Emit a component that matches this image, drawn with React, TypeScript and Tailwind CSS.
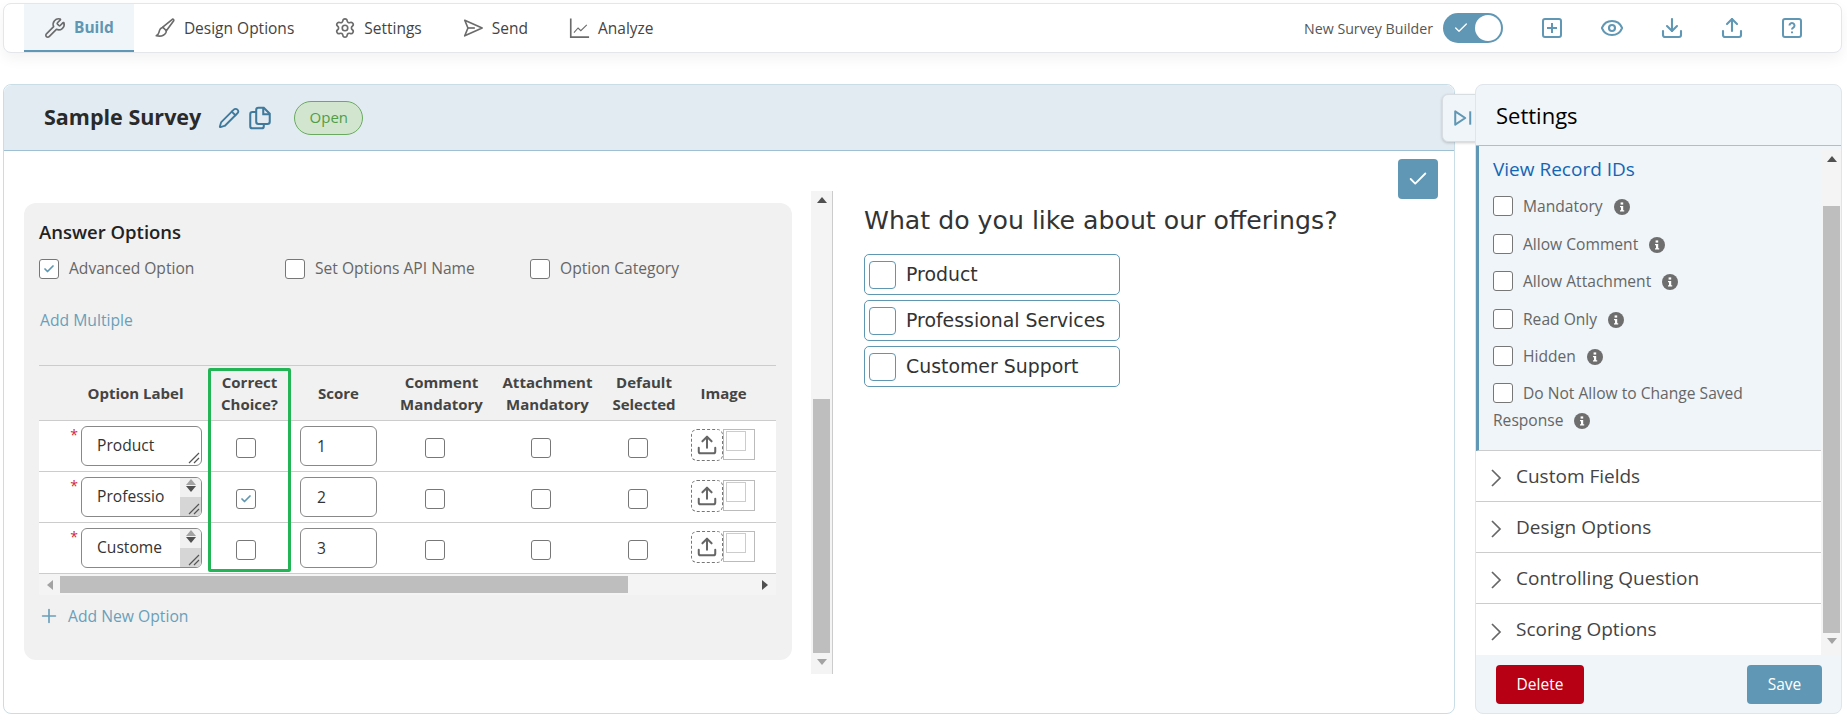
import React from "react";
import { Wrench, Settings as Gear, Eye, Download, Upload, Pencil, Check, Plus } from "lucide-react";

const grid = "grid grid-cols-[169px_83px_95px_106px_106px_87px_91px]";

const Box: React.FC<{ checked?: boolean }> = ({ checked }) => (
  <span className="w-5 h-5 shrink-0 flex items-center justify-center bg-white border border-[#777] rounded-[3px]">
    {checked && <Check className="w-3 h-3 text-[#5f97b3]" strokeWidth={3.5} />}
  </span>
);

const Info = () => (
  <svg viewBox="0 0 16 16" className="w-4 h-4 shrink-0">
    <circle cx="8" cy="8" r="8" fill="#6e6e6e" />
    <rect x="6.6" y="3.4" width="2.6" height="2.2" fill="#fff" />
    <path d="M6 7h3.2v4.2h1v1.2H6v-1.2h1V8.2H6z" fill="#fff" />
  </svg>
);

const Grip = () => (
  <svg viewBox="0 0 12 12" className="absolute right-[1px] bottom-[1px] w-3 h-3">
    <path d="M1 11 11 1M6 11l5-5" stroke="#555" strokeWidth="1.2" fill="none" />
  </svg>
);

const Arrow: React.FC<{ dir: "up" | "down" | "left" | "right"; dark?: boolean }> = ({ dir, dark }) => {
  const pts = { up: "0,7 5,1 10,7", down: "0,1 5,7 10,1", left: "8,0 2,5 8,10", right: "2,0 8,5 2,10" }[dir];
  return (
    <svg viewBox="0 0 10 10" className="w-[10px] h-[10px]">
      <polygon points={pts} fill={dark ? "#505050" : "#a3a3a3"} />
    </svg>
  );
};

type IconProps = { className?: string; strokeWidth?: number };

const BrushIcon: React.FC<IconProps> = ({ className, strokeWidth }) => (
  <svg viewBox="0 0 24 24" className={className} fill="none" stroke="currentColor" strokeWidth={strokeWidth} strokeLinejoin="round" strokeLinecap="round">
    <path d="M20 2.500c1-.5 2 .5 1.500 1.500L13.500 15 9.500 11z" />
    <path d="M9.500 11.500c-3 .5-3.500 2.500-4 5-.3 1.500-1.500 3-3 4 4.500 1 8.500 0 10.500-3.500.5-1 .5-1.500.2-2.500" />
  </svg>
);

const SendIcon: React.FC<IconProps> = ({ className, strokeWidth }) => (
  <svg viewBox="0 0 24 24" className={className} fill="none" stroke="currentColor" strokeWidth={strokeWidth} strokeLinejoin="round">
    <path d="M3 3.500 22 12 3 20.500 6.500 12z" />
    <path d="M6.500 12H14" />
  </svg>
);

const ChartIcon: React.FC<IconProps> = ({ className, strokeWidth }) => (
  <svg viewBox="0 0 24 24" className={className} fill="none" stroke="currentColor" strokeWidth={strokeWidth}>
    <path d="M3 1.500V22h20" />
    <path d="M6.500 17l4.500-5 3 3 6.500-6.500" strokeWidth="1.200" />
  </svg>
);

const tabs = [
  { label: "Design Options", Icon: BrushIcon },
  { label: "Settings", Icon: Gear },
  { label: "Send", Icon: SendIcon },
  { label: "Analyze", Icon: ChartIcon },
];

const TopBar = () => (
  <div className="mx-[3px] mt-[3px] w-[1839px] h-[50px] flex items-stretch justify-between bg-white border border-[#e3e6ea] rounded-lg shadow-[0_6px_14px_rgba(0,0,0,0.05)]">
    <div className="flex pl-5">
      <div className="flex items-center gap-2 px-5 bg-[#eff5f8] border-b-2 border-[#6097b4] pt-[2px]">
        <Wrench className="w-[22px] h-[22px] text-[#6b6b6b]" strokeWidth={1.8} />
        <span className="text-[15.5px] font-bold text-[#6097b4]">Build</span>
      </div>
      {tabs.map(({ label, Icon }) => (
        <div key={label} className="flex items-center gap-2 px-5">
          <Icon className="w-[22px] h-[22px] text-[#6b6b6b]" strokeWidth={1.8} />
          <span className="mt-[2px] text-[15.5px] text-[#444]">{label}</span>
        </div>
      ))}
    </div>
    <div className="flex items-center pr-[37px]">
      <span className="mt-[1px] text-[14.2px] text-[#555]">New Survey Builder</span>
      <div className="ml-[10px] w-[60px] h-[30px] rounded-full bg-[#6097b4] flex items-center justify-between pl-[10px] pr-[2px]">
        <Check className="w-4 h-4 text-white" strokeWidth={2} />
        <span className="w-[26px] h-[26px] rounded-full bg-white" />
      </div>
      <div className="ml-[37px] flex items-center gap-[36px] text-[#6097b4]">
        <svg viewBox="0 0 24 24" className="w-6 h-6" fill="none" stroke="currentColor" strokeWidth="2">
          <rect x="3" y="3" width="18" height="18" rx="2" />
          <path d="M12 7v10M7 12h10" />
        </svg>
        <Eye className="w-6 h-6" strokeWidth={2.1} />
        <Download className="w-6 h-6" strokeWidth={2.1} />
        <Upload className="w-6 h-6" strokeWidth={2.1} />
        <svg viewBox="0 0 24 24" className="w-6 h-6" fill="none" stroke="currentColor" strokeWidth="2">
          <rect x="3" y="3" width="18" height="18" rx="2" />
          <path d="M9.500 9.500a2.500 2.500 0 1 1 3.800 2.100c-.8.500-1.300 1-1.300 2" />
          <path d="M12 15.500v1.800" />
        </svg>
      </div>
    </div>
  </div>
);

const allRows = [
  { label: "Product", score: "1", correct: false, scroll: false },
  { label: "Professional Services", score: "2", correct: true, scroll: true },
  { label: "Customer Support", score: "3", correct: false, scroll: true },
];

const CheckCell: React.FC<{ checked?: boolean }> = ({ checked }) => (
  <div className="flex justify-center pr-2 pt-[17px]">
    <Box checked={checked} />
  </div>
);

const OptionRow: React.FC<(typeof allRows)[number]> = ({ label, score, correct, scroll }) => (
  <div className={`${grid} h-[51px] bg-white border-b border-[#ccc]`}>
    <div className="flex justify-end pr-[6px] pt-[5px]">
      <span className="mr-[3px] text-[14px] leading-[18px] text-[#d0263c]">*</span>
      <div className="relative w-[121px] h-[40px] border border-[#888] rounded-md overflow-hidden bg-white">
        <div className="pl-[15px] pt-[5px] w-[86px] text-[15.6px] leading-[26px] text-[#333] break-all">{label}</div>
        {scroll && (
          <div className="absolute right-0 top-0 bottom-0 w-[21px] bg-[#f1f1f1] flex flex-col items-center">
            <Arrow dir="up" />
            <div className="-mt-[3px]"><Arrow dir="down" dark /></div>
            <div className="mt-[2px] w-full flex-1 bg-[#d6d6d6]" />
          </div>
        )}
        <Grip />
      </div>
    </div>
    <CheckCell checked={correct} />
    <div className="flex justify-center pt-[5px]">
      <div className="w-[77px] h-[40px] border border-[#888] rounded-md pl-4 pt-[2px] flex items-center text-[15.6px] text-[#333]">{score}</div>
    </div>
    <CheckCell />
    <CheckCell />
    <CheckCell />
    <div className="flex items-start pl-[6px] pt-2">
      <div className="w-8 h-8 border border-dashed border-[#777] rounded-md flex items-center justify-center">
        <Upload className="w-[22px] h-[22px] text-[#666]" strokeWidth={2.2} />
      </div>
      <div className="w-8 h-[31px] border border-[#bbb] pl-[2px] pt-[1px]">
        <div className="w-5 h-5 border border-[#ccc]" />
      </div>
    </div>
  </div>
);

const AnswerOptions = () => (
  <div className="w-[768px] h-[457px] mt-3 px-[15px] bg-[#f1f1f1] rounded-xl">
    <div className="pt-[15px] text-[18.500px] leading-[28px] font-semibold text-[#222]">Answer Options</div>
    <div className="mt-[13px] flex h-5 items-center text-[15.6px] text-[#666]">
      <div className="w-[246px] flex items-center gap-[10px]"><Box checked />Advanced Option</div>
      <div className="w-[245px] flex items-center gap-[10px]"><Box />Set Options API Name</div>
      <div className="flex items-center gap-[10px]"><Box />Option Category</div>
    </div>
    <div className="mt-[29px] pl-[1px] text-[15.7px] leading-6 text-[#6a9fb9]">Add Multiple</div>
    <div className="relative mt-[33px] w-[737px]">
      <div className={`${grid} h-[56px] border-y border-[#ccc] text-[15px] leading-[22px] font-bold text-[#444] text-center items-center`}>
        <div className="pl-[24px]">Option Label</div>
        <div>Correct<br />Choice?</div>
        <div>Score</div>
        <div className="pl-[5px]">Comment<br />Mandatory</div>
        <div className="pl-[5px]">Attachment<br />Mandatory</div>
        <div className="pl-[5px]">Default<br />Selected</div>
        <div className="-ml-[14px]">Image</div>
      </div>
      {allRows.map((r) => <OptionRow key={r.label} {...r} />)}
      <div className="absolute left-[169px] top-[3px] w-[83px] h-[204px] border-[3px] border-[#22b455] rounded-[2px]" />
      <div className="h-[21px] bg-[#f4f4f4] flex items-center">
        <div className="w-[21px] flex justify-center"><Arrow dir="left" /></div>
        <div className="w-[568px] h-[17px] bg-[#bebebe]" />
        <div className="flex-1 flex justify-end pr-[6px]"><Arrow dir="right" dark /></div>
      </div>
    </div>
    <div className="mt-[9px] flex items-center gap-[8px] text-[15.7px] leading-6 text-[#6a9fb9]">
      <Plus className="-ml-[1px] w-[22px] h-[22px]" strokeWidth={1.8} />
      Add New Option
    </div>
  </div>
);

const Preview = () => (
  <div className="ml-[31px] font-['DejaVu_Sans',sans-serif]">
    <div className="pt-[13px] text-[25.200px] leading-[34px] text-[#333]">What do you like about our offerings?</div>
    <div className="mt-[16px] flex flex-col gap-[5px]">
      {allRows.map((r) => (
        <div key={r.label} className="w-[256px] h-[41px] flex items-center border border-[#5f97b3] rounded-[5px] pl-[4px] text-[18.900px] text-[#333]">
          <span className="w-[27px] h-[28px] border border-[#5f97b3] rounded-[4px]" />
          <span className="ml-[10px]">{r.label}</span>
        </div>
      ))}
    </div>
  </div>
);

const VScroll = () => (
  <div className="ml-[19px] w-[22px] h-[483px] bg-[#f4f4f4] border-r border-[#ccc] flex flex-col items-center">
    <div className="h-[20px] flex items-center"><Arrow dir="up" dark /></div>
    <div className="mt-[188px] w-[17px] h-[254px] bg-[#bebebe]" />
    <div className="h-[20px] flex items-center"><Arrow dir="down" /></div>
  </div>
);

const MainPanel = () => (
  <div className="relative w-[1452px] h-[630px] bg-white border border-[#c9dde6] rounded-lg">
    <div className="h-[66px] flex items-center pl-10 bg-[#e3ebf2] border-b border-[#9fc0d3] rounded-t-lg">
      <span className="text-[21.500px] font-bold text-[#2a2a2a] -mt-[1px]">Sample Survey</span>
      <Pencil className="ml-[17px] w-[22px] h-[22px] text-[#3f7a9c]" strokeWidth={2} />
      <svg viewBox="0 0 24 24" className="ml-[7px] w-[26px] h-[26px] text-[#3f7a9c]" fill="none" stroke="currentColor" strokeWidth="1.900">
        <path d="M10.500 2.500h5l5.500 5.500v7.500a2 2 0 0 1-2 2H10.500a2 2 0 0 1-2-2v-11a2 2 0 0 1 2-2z" />
        <path d="M15 2.500V8.500h6" />
        <path d="M8.500 6.500H5a2 2 0 0 0-2 2V19.500a2 2 0 0 0 2 2h8.500a2 2 0 0 0 2-2v-2" />
      </svg>
      <span className="ml-[21px] w-[69px] h-[34px] flex items-center justify-center bg-[#d2e6cf] border border-[#6aaa60] rounded-[17px] text-[15px] text-[#4f9d47]">Open</span>
    </div>
    <div className="h-[40px] flex justify-end pr-[16px] pt-[8px]">
      <div className="w-10 h-10 flex items-center justify-center bg-[#6097b4] rounded-[4px]">
        <Check className="w-[22px] h-[22px] text-white" strokeWidth={2} />
      </div>
    </div>
    <div className="flex items-start pl-5">
      <AnswerOptions />
      <VScroll />
      <Preview />
    </div>
    <div className="absolute left-[1438px] top-[9px] z-10 w-[36px] h-[48px] flex items-center pl-[10px] bg-[#eff5f8] border border-[#d8dde2] rounded-l-md shadow-[0_1px_3px_rgba(0,0,0,0.2)]">
      <svg viewBox="0 0 18 18" className="w-5 h-5" fill="none" stroke="#6097b4" strokeWidth="1.8">
        <path d="M2 3v12l9-6z" strokeLinejoin="round" />
        <path d="M15.500 3v12" />
      </svg>
    </div>
  </div>
);

const settings = ["Mandatory", "Allow Comment", "Allow Attachment", "Read Only", "Hidden"];
const sections = ["Custom Fields", "Design Options", "Controlling Question", "Scoring Options"];

const SettingsPanel = () => (
  <div className="relative z-20 ml-[20px] w-[367px] h-[630px] bg-[#eff5f8] border border-[#dfe5ea] rounded-lg flex flex-col">
    <div className="h-[61px] shrink-0 flex items-center pl-5 border-b border-[#bbb] text-[22px] font-medium text-black">Settings</div>
    <div className="flex h-[509px]">
      <div className="w-[346px]">
        <div className="h-[305px] border-l-[3px] border-[#6097b4] pl-[14px] border-b border-b-[#ccc]">
          <div className="pt-[9px] text-[19px] leading-[28px] text-[#1465b5]">View Record IDs</div>
          <div className="mt-[13px] flex flex-col gap-[17.5px] text-[15.6px] text-[#666]">
            {settings.map((s) => (
              <div key={s} className="h-5 flex items-center">
                <Box />
                <span className="ml-[10px] mt-[2px]">{s}</span>
                <span className="ml-[11px] mt-[2px]"><Info /></span>
              </div>
            ))}
          </div>
          <div className="mt-[17px] text-[15.6px] text-[#666] leading-[27px]">
            <div className="flex items-center h-5"><Box /><span className="ml-[10px] mt-[1px]">Do Not Allow to Change Saved</span></div>
            <div className="mt-[4px] flex items-center">Response<span className="ml-[11px]"><Info /></span></div>
          </div>
        </div>
        {sections.map((s, i) => (
          <div key={s} className={`h-[51px] flex items-center bg-white pl-[14px] text-[19px] text-[#444] ${i < 3 ? "border-b border-[#ccc]" : ""}`}>
            <svg viewBox="0 0 12 18" className="mt-[4px] w-3 h-[18px]" fill="none" stroke="#666" strokeWidth="1.7">
              <path d="M2 1l8 8-8 8" />
            </svg>
            <span className="ml-[14px]">{s}</span>
          </div>
        ))}
      </div>
      <div className="ml-[1px] mt-1 w-[19px] bg-[#f4f4f4] flex flex-col items-center">
        <div className="h-[20px] flex items-center"><Arrow dir="up" dark /></div>
        <div className="mt-[36px] w-[17px] h-[427px] bg-[#bebebe]" />
        <div className="h-[18px] flex items-center"><Arrow dir="down" /></div>
      </div>
    </div>
    <div className="flex-1 flex items-start justify-between pl-5 pr-[19px] pt-[10px]">
      <div className="w-[88px] h-[39px] flex items-center justify-center rounded bg-[#b80015] text-[15.5px] font-medium text-white">Delete</div>
      <div className="w-[75px] h-[39px] flex items-center justify-center rounded bg-[#6097b4] text-[15.5px] font-medium text-white">Save</div>
    </div>
  </div>
);

export default function App() {
  return (
    <div className="w-[1847px] h-[716px] overflow-hidden bg-white font-['Open_Sans',sans-serif]">
      <TopBar />
      <div className="mt-[31px] ml-[3px] flex">
        <MainPanel />
        <SettingsPanel />
      </div>
    </div>
  );
}
